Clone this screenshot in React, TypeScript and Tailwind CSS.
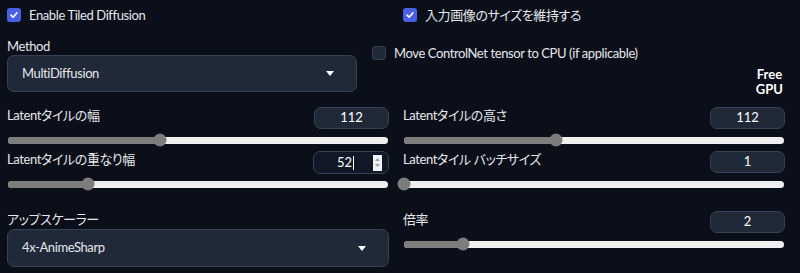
import React from 'react';

const font = {
  fontFamily: 'Lato, "Noto Sans CJK JP", sans-serif',
  fontFeatureSettings: '"palt"',
};

function Check({ checked, label }: { checked: boolean; label: string }) {
  return (
    <div className="flex h-[14px] items-center gap-[8px]">
      {checked ? (
        <div className="flex h-[14px] w-[14px] items-center justify-center rounded-[3px] bg-[#4a60e4]">
          <svg width="10" height="10" viewBox="0 0 10 10">
            <path d="M2 5.2 L4.1 7.2 L8 2.8" stroke="white" strokeWidth="1.6" fill="none" strokeLinecap="round" strokeLinejoin="round" />
          </svg>
        </div>
      ) : (
        <div className="h-[14px] w-[14px] rounded-[3px] border border-[#374151] bg-[#1f2937]" />
      )}
      <span className="text-[13px] leading-[16px] tracking-[-0.4px] text-[#e5e7eb]">{label}</span>
    </div>
  );
}

function Dropdown({ value, h }: { value: string; h: string }) {
  return (
    <div className={`flex ${h} items-center justify-between rounded-[7px] border border-[#374151] bg-[#1f2937] pl-[14px] pr-[22px]`}>
      <span className="text-[13px] tracking-[-0.4px] text-[#e5e7eb]">{value}</span>
      <svg width="8" height="5" viewBox="0 0 8 5">
        <path d="M0 0 H8 L4 5 Z" fill="white" />
      </svg>
    </div>
  );
}

function Slider({ label, value, pct, focused }: { label: string; value: string; pct: number; focused?: boolean }) {
  return (
    <div className="flex flex-col">
      <div className="flex h-[22px] items-start justify-between">
        <span className="h-[16px] text-[13px] leading-[16px] tracking-[-0.4px] text-[#e5e7eb]">{label}</span>
        {focused ? (
          <div className="flex h-[23px] w-[76px] items-center justify-end rounded-[7px] border border-[#374151] bg-[#111827] pr-[6px]">
            <span className="text-[13px] text-white">52</span>
            <span className="ml-[1px] h-[14px] w-px bg-white" />
            <div className="ml-[19px] flex h-[16px] w-[9px] flex-col items-center justify-center gap-[3px] bg-[#f3f4f6]">
              <svg width="5" height="3" viewBox="0 0 5 3"><path d="M0 3 L2.5 0 L5 3 Z" fill="#9ca3af" /></svg>
              <svg width="5" height="3" viewBox="0 0 5 3"><path d="M0 0 L2.5 3 L5 0 Z" fill="#9ca3af" /></svg>
            </div>
          </div>
        ) : (
          <div className="flex h-[22px] w-[75px] items-center justify-center rounded-[7px] border border-[#374151] bg-[#1f2937]">
            <span className="text-[13px] text-white">{value}</span>
          </div>
        )}
      </div>
      <div className="flex h-[22px] items-center px-px">
        <div className="relative h-[7px] w-full rounded-full bg-[#efefef]">
          <div className="h-full rounded-l-full bg-[#7d7d7d]" style={{ width: `${pct}%` }} />
          <div
            className="absolute top-1/2 h-[13px] w-[13px] -translate-x-1/2 -translate-y-1/2 rounded-full bg-[#7d7d7d]"
            style={{ left: `${pct}%` }}
          />
        </div>
      </div>
    </div>
  );
}

export default function App() {
  return (
    <div className="h-[273px] w-[800px] bg-[#0b0f19] pl-[7px] pr-[15px] pt-[8px]" style={font}>
      {/* top checkboxes */}
      <div className="grid grid-cols-2 gap-[14px]">
        <Check checked label="Enable Tiled Diffusion" />
        <Check checked label="入力画像のサイズを維持する" />
      </div>

      {/* method row */}
      <div className="mt-[16px] flex h-[54px]">
        <div className="flex w-[350px] flex-col">
          <span className="h-[16px] text-[13px] leading-[16px] tracking-[-0.4px] text-[#e5e7eb]">Method</span>
          <div className="mt-[1px]">
            <Dropdown value="MultiDiffusion" h="h-[37px]" />
          </div>
        </div>
        <div className="ml-[15px] flex flex-1 flex-col pt-[8px]">
          <Check checked={false} label="Move ControlNet tensor to CPU (if applicable)" />
          <div className="mt-[7px] self-end pr-[2px] text-center text-[13px] font-bold leading-[15px] text-white">
            <div>Free</div>
            <div>GPU</div>
          </div>
        </div>
      </div>

      {/* sliders */}
      <div className="mt-[15px] grid grid-cols-2 gap-x-[14px]">
        <Slider label="Latentタイルの幅" value="112" pct={40} />
        <Slider label="Latentタイルの高さ" value="112" pct={40} />
        <Slider label="Latentタイルの重なり幅" value="52" pct={21} focused />
        <Slider label="Latentタイル バッチサイズ" value="1" pct={0} />
      </div>

      {/* upscaler row */}
      <div className="mt-[16px] grid grid-cols-2 gap-x-[14px]">
        <div className="flex flex-col">
          <span className="h-[16px] text-[13px] leading-[16px] tracking-[-0.4px] text-[#e5e7eb]">アップスケーラー</span>
          <div className="mt-[2px]">
            <Dropdown value="4x-AnimeSharp" h="h-[38px]" />
          </div>
        </div>
        <Slider label="倍率" value="2" pct={15.5} />
      </div>
    </div>
  );
}
